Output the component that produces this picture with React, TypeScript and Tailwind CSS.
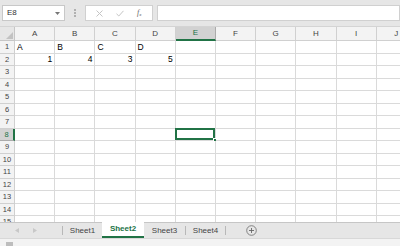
import React from "react";

const COLS = ["A", "B", "C", "D", "E", "F", "G", "H", "I", "J"];
const ROWS = Array.from({ length: 15 }, (_, i) => i + 1);

const DATA: Record<string, { v: string; num?: boolean }> = {
  A1: { v: "A" },
  B1: { v: "B" },
  C1: { v: "C" },
  D1: { v: "D" },
  A2: { v: "1", num: true },
  B2: { v: "4", num: true },
  C2: { v: "3", num: true },
  D2: { v: "5", num: true },
};

function Toolbar() {
  return (
    <div className="h-[27px] flex items-center bg-[#e6e6e6] border-b border-[#d4d4d4]">
      <div className="ml-[2px] w-[63px] h-[16px] bg-white border border-[#c8c8c8] flex items-center justify-between pl-[4px] pr-[4px]">
        <span className="text-[8px] text-[#333]">E8</span>
        <svg width="5" height="3" viewBox="0 0 5 3">
          <path d="M0 0 L5 0 L2.5 3 Z" fill="#777" />
        </svg>
      </div>
      <div className="w-[20px] flex flex-col items-center gap-[1.5px]">
        <span className="w-[1.5px] h-[1.5px] bg-[#b0b0b0]" />
        <span className="w-[1.5px] h-[1.5px] bg-[#b0b0b0]" />
        <span className="w-[1.5px] h-[1.5px] bg-[#b0b0b0]" />
      </div>
      <div className="w-[68px] h-[16px] bg-white border border-[#d0d0d0] flex items-center justify-around px-[4px]">
        <svg width="7" height="7" viewBox="0 0 7 7">
          <path d="M0.5 0.5 L6.5 6.5 M6.5 0.5 L0.5 6.5" stroke="#c4c4c4" strokeWidth="1" />
        </svg>
        <svg width="8" height="7" viewBox="0 0 8 7">
          <path d="M0.5 3.8 L2.8 6 L7.5 0.8" stroke="#c4c4c4" strokeWidth="1" fill="none" />
        </svg>
        <span className="text-[8px] italic text-[#666] font-['Liberation_Serif',serif]">
          f<sub className="text-[5px]">x</sub>
        </span>
      </div>
      <div className="ml-[4px] flex-1 h-[16px] bg-white border border-[#d0d0d0]" />
    </div>
  );
}

function Grid() {
  return (
    <div className="flex-1 overflow-hidden bg-white">
      <div className="grid grid-cols-[15px_repeat(10,40.2px)] grid-rows-[14px] auto-rows-[12.5px]">
        <div className="bg-[#e6e6e6] border-r border-b border-[#c6c6c6] relative">
          <svg className="absolute right-[1px] bottom-[1px]" width="7" height="7" viewBox="0 0 7 7">
            <path d="M7 0 L7 7 L0 7 Z" fill="#c2c2c2" />
          </svg>
        </div>
        {COLS.map((c) =>
          c === "E" ? (
            <div
              key={c}
              className="bg-[#d2d2d2] border-r border-[#ababab] border-b-2 border-b-[#217346] flex items-center justify-center text-[8px] text-[#217346]"
            >
              {c}
            </div>
          ) : (
            <div
              key={c}
              className="bg-[#f3f3f3] border-r border-b border-[#d0d0d0] flex items-center justify-center text-[8px] text-[#444]"
            >
              {c}
            </div>
          )
        )}
        {ROWS.map((r) => (
          <React.Fragment key={r}>
            <div
              className={
                r === 8
                  ? "bg-[#d2d2d2] border-r-2 border-r-[#217346] border-b border-[#ababab] flex items-center justify-center text-[7.5px] text-[#217346]"
                  : "bg-[#f3f3f3] border-r border-b border-[#d0d0d0] flex items-center justify-center text-[7.5px] text-[#444]"
              }
            >
              {r}
            </div>
            {COLS.map((c) => {
              const cell = DATA[c + r];
              const selected = c === "E" && r === 8;
              return (
                <div
                  key={c}
                  className={`relative border-r border-b border-[#dadada] flex items-center px-[2px] text-[8.5px] leading-none text-black ${
                    cell?.num ? "justify-end" : "justify-start"
                  }`}
                >
                  {cell?.v}
                  {selected && (
                    <>
                      <div className="absolute -left-[1px] -top-[1px] right-0 bottom-0 border-2 border-[#217346]" />
                      <div className="absolute -right-[2px] -bottom-[2px] w-[4px] h-[4px] bg-[#217346] border border-white" />
                    </>
                  )}
                </div>
              );
            })}
          </React.Fragment>
        ))}
      </div>
    </div>
  );
}

function Tabs() {
  return (
    <div className="h-[16px] flex items-stretch bg-[#e6e6e6] border-t border-[#c6c6c6] text-[8px]">
      <div className="w-[62px] flex items-center">
        <svg className="ml-[15px]" width="4" height="5" viewBox="0 0 4 5">
          <path d="M4 0 L0 2.5 L4 5 Z" fill="#c8c8c8" />
        </svg>
        <svg className="ml-[14px]" width="4" height="5" viewBox="0 0 4 5">
          <path d="M0 0 L4 2.5 L0 5 Z" fill="#c8c8c8" />
        </svg>
      </div>
      <div className="w-px my-[3px] bg-[#b8b8b8]" />
      <div className="w-[39px] flex items-center justify-center text-[#444]">Sheet1</div>
      <div className="w-[42px] -mt-px bg-white border-b-2 border-[#217346] flex items-center justify-center font-bold text-[#217346]">
        Sheet2
      </div>
      <div className="w-[41px] flex items-center justify-center text-[#444]">Sheet3</div>
      <div className="w-px my-[3px] bg-[#b8b8b8]" />
      <div className="w-[39px] flex items-center justify-center text-[#444]">Sheet4</div>
      <div className="w-px my-[3px] bg-[#b8b8b8]" />
      <div className="ml-[20px] flex items-center">
        <svg width="11" height="11" viewBox="0 0 11 11">
          <circle cx="5.5" cy="5.5" r="4.8" fill="none" stroke="#777" strokeWidth="0.9" />
          <path d="M5.5 3 L5.5 8 M3 5.5 L8 5.5" stroke="#666" strokeWidth="0.9" />
        </svg>
      </div>
    </div>
  );
}

export default function App() {
  return (
    <div className="w-[400px] h-[246px] overflow-hidden flex flex-col bg-[#e6e6e6] font-['Liberation_Sans',Arial,sans-serif]">
      <Toolbar />
      <Grid />
      <Tabs />
      <div className="h-[8px] bg-[#f3f3f3] border-t border-[#d8d8d8] flex items-center">
        <div className="ml-[6px] mt-[3px] w-[7px] h-[5px] bg-[#bdbdbd]" />
      </div>
    </div>
  );
}
